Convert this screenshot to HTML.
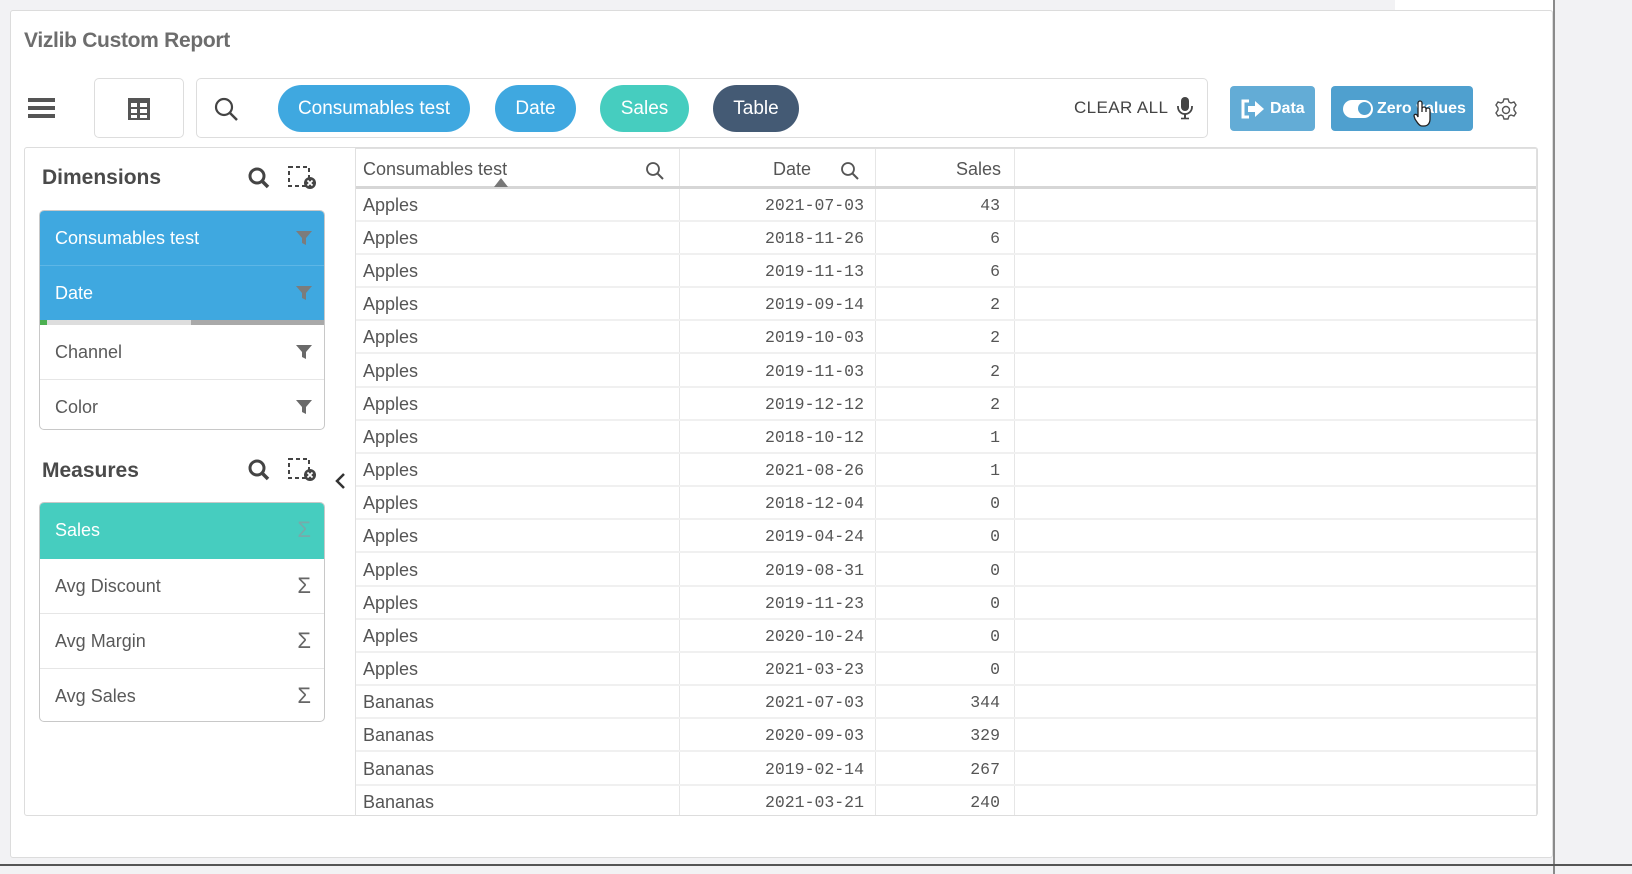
<!DOCTYPE html>
<html><head><meta charset="utf-8">
<style>
*{box-sizing:border-box;margin:0;padding:0}
body{width:1632px;height:874px;background:#f2f2f4;font-family:"Liberation Sans",sans-serif;position:relative;overflow:hidden;color:#595959}
.a{position:absolute}
.card{left:10px;top:10px;width:1543px;height:848px;background:#fff;border:1px solid #dcdcdc;border-radius:3px}
.title{left:24px;top:29px;font-size:21px;font-weight:bold;color:#6d6d6d;letter-spacing:-0.3px}
.box{border:1px solid #ddd;border-radius:5px;background:#fff}
.pill{height:47px;top:85px;border-radius:24px;color:#fff;font-size:19px;line-height:47px;text-align:center}
.btn{top:86px;height:45px;border-radius:4px;color:#fff;font-weight:bold;font-size:16px;line-height:45px}
.list{left:39px;width:286px;border:1px solid #c8c8c8;border-radius:5px;overflow:hidden;background:#fff}
.it{height:55px;line-height:54px;padding-left:15px;font-size:18px;color:#595959;border-bottom:1px solid #e6e6e6;position:relative}
.it svg{position:absolute;right:12px;top:19px}
.h2{font-size:21px;font-weight:bold;color:#4a4a4a}
.row{position:absolute;left:356px;width:1180px;height:33px;border-bottom:2px solid #f0f0f0;font-size:18px;line-height:33px;color:#555}
.row span{position:absolute;top:0}
.c1{left:7px}
.c2{right:672px;font-family:"Liberation Mono",monospace;font-size:16.5px}
.c3{right:536px;font-family:"Liberation Mono",monospace;font-size:16.5px}
.vl{position:absolute;top:149px;height:666px;width:1px;background:#e6e6e6}
</style></head><body>
<div class="a" style="left:1395px;top:0;width:160px;height:11px;background:#fff"></div>
<div class="a" style="left:1553px;top:0;width:2px;height:874px;background:#8a8a8a"></div>
<div class="a" style="left:0;top:864px;width:1632px;height:2px;background:#555"></div>
<div class="a card"></div>
<div class="a title">Vizlib Custom Report</div>

<div class="a" style="left:28px;top:98px;width:27px;height:4px;background:#555"></div>
<div class="a" style="left:28px;top:106px;width:27px;height:4px;background:#555"></div>
<div class="a" style="left:28px;top:114px;width:27px;height:4px;background:#555"></div>

<div class="a box" style="left:94px;top:78px;width:90px;height:60px"></div>
<svg class="a" style="left:127px;top:97px" width="24" height="24" viewBox="0 0 24 24"><rect x="1" y="1" width="22" height="22" fill="#555"/><g fill="#fff"><rect x="4" y="6" width="6" height="4"/><rect x="13" y="6" width="7" height="4"/><rect x="4" y="12" width="6" height="4"/><rect x="13" y="12" width="7" height="4"/><rect x="4" y="18" width="6" height="3"/><rect x="13" y="18" width="7" height="3"/></g></svg>

<div class="a box" style="left:196px;top:78px;width:1012px;height:60px"></div>
<svg class="a" style="left:213px;top:96px" width="26" height="26" viewBox="0 0 26 26"><circle cx="11" cy="11" r="8" fill="none" stroke="#444" stroke-width="2.2"/><line x1="17" y1="17" x2="24" y2="24" stroke="#444" stroke-width="2.5"/></svg>
<div class="a pill" style="left:278px;width:192px;background:#3fa8e0">Consumables test</div>
<div class="a pill" style="left:495px;width:81px;background:#3fa8e0">Date</div>
<div class="a pill" style="left:600px;width:89px;background:#46cdbf">Sales</div>
<div class="a pill" style="left:713px;width:86px;background:#445a74">Table</div>
<div class="a" style="left:1074px;top:98px;font-size:17px;letter-spacing:0.4px;color:#444">CLEAR ALL</div>
<svg class="a" style="left:1176px;top:96px" width="18" height="24" viewBox="0 0 18 24"><rect x="5" y="1" width="8" height="14" rx="4" fill="#444"/><path d="M2 10v1a7 7 0 0 0 14 0v-1" fill="none" stroke="#444" stroke-width="1.8"/><line x1="9" y1="18" x2="9" y2="22" stroke="#444" stroke-width="2"/><line x1="5" y1="22.5" x2="13" y2="22.5" stroke="#444" stroke-width="1.6"/></svg>

<div class="a btn" style="left:1230px;width:85px;background:#63acd6"><svg style="position:absolute;left:10px;top:12px" width="26" height="22" viewBox="0 0 26 22"><path d="M9 3H3v16h6" fill="none" stroke="#fff" stroke-width="3"/><path d="M8 8h7V3l9 8-9 8v-5H8z" fill="#fff"/></svg><span style="position:absolute;left:40px">Data</span></div>
<div class="a btn" style="left:1331px;width:142px;background:#4fa0cf"><span style="position:absolute;left:12px;top:14px;width:30px;height:18px;border-radius:9px;background:#fff"></span><span style="position:absolute;left:27px;top:16px;width:13px;height:13px;border-radius:50%;background:#4fa0cf"></span><span style="position:absolute;left:46px">Zero values</span></div>
<svg class="a" style="left:1413px;top:100px" width="20" height="28" viewBox="0 0 20 28"><path d="M5 14V3a2 2 0 0 1 4 0v9 -3a2 2 0 0 1 4 0v3-2a2 2 0 0 1 4 0v9c0 4-2 7-6 7H9c-3 0-5-4-7-7l-1-3c0-2 2-2 3-1l1 2z" fill="#fff" stroke="#222" stroke-width="1.3"/></svg>
<svg class="a" style="left:1493px;top:97px" width="26" height="26" viewBox="0 0 26 26"><path d="M11 2h4l1 3 2 1 3-1 2 3-2 3v2l2 3-2 3-3-1-2 1-1 3h-4l-1-3-2-1-3 1-2-3 2-3v-2L3 8l2-3 3 1 2-1z" fill="none" stroke="#555" stroke-width="1.4"/><circle cx="13" cy="13" r="3.5" fill="none" stroke="#555" stroke-width="1.4"/></svg>

<div class="a" style="left:24px;top:147px;width:1514px;height:669px;border:1px solid #ddd;border-radius:3px"></div>
<div class="a h2" style="left:42px;top:166px">Dimensions</div>
<svg class="a" style="left:247px;top:166px" width="24" height="24" viewBox="0 0 24 24"><circle cx="10" cy="10" r="7" fill="none" stroke="#444" stroke-width="3"/><line x1="15" y1="15" x2="21" y2="21" stroke="#444" stroke-width="3.5"/></svg>
<svg class="a" style="left:287px;top:165px" width="32" height="26" viewBox="0 0 32 26"><rect x="2" y="2" width="20" height="19" fill="none" stroke="#444" stroke-width="2" stroke-dasharray="4 3"/><circle cx="23" cy="18" r="6" fill="#444"/><path d="M20.5 15.5l5 5M25.5 15.5l-5 5" stroke="#fff" stroke-width="1.8"/></svg>

<div class="a list" style="top:210px;height:220px">
<div class="it" style="background:#3fa8e0;color:#fff;border-color:#5db6e6">Consumables test<svg width="16" height="16" viewBox="0 0 16 16"><path d="M0 1h16l-6 7v7l-4-2V8z" fill="#7c7c7c"/></svg></div>
<div class="it" style="background:#3fa8e0;color:#fff;border:0;height:54px">Date<svg width="16" height="16" viewBox="0 0 16 16"><path d="M0 1h16l-6 7v7l-4-2V8z" fill="#7c7c7c"/></svg></div>
<div style="height:5px;background:#a9a9a9;position:relative"><div style="position:absolute;left:0;width:7px;height:5px;background:#4caf50"></div><div style="position:absolute;left:7px;width:144px;height:5px;background:#ddd"></div></div>
<div class="it">Channel<svg width="16" height="16" viewBox="0 0 16 16"><path d="M0 1h16l-6 7v7l-4-2V8z" fill="#6a6a6a"/></svg></div>
<div class="it" style="border:0">Color<svg width="16" height="16" viewBox="0 0 16 16"><path d="M0 1h16l-6 7v7l-4-2V8z" fill="#6a6a6a"/></svg></div>
</div>

<div class="a h2" style="left:42px;top:459px">Measures</div>
<svg class="a" style="left:247px;top:458px" width="24" height="24" viewBox="0 0 24 24"><circle cx="10" cy="10" r="7" fill="none" stroke="#444" stroke-width="3"/><line x1="15" y1="15" x2="21" y2="21" stroke="#444" stroke-width="3.5"/></svg>
<svg class="a" style="left:287px;top:457px" width="32" height="26" viewBox="0 0 32 26"><rect x="2" y="2" width="20" height="19" fill="none" stroke="#444" stroke-width="2" stroke-dasharray="4 3"/><circle cx="23" cy="18" r="6" fill="#444"/><path d="M20.5 15.5l5 5M25.5 15.5l-5 5" stroke="#fff" stroke-width="1.8"/></svg>
<svg class="a" style="left:334px;top:472px" width="12" height="18" viewBox="0 0 12 18"><path d="M10 2L3 9l7 7" fill="none" stroke="#333" stroke-width="2.5"/></svg>

<div class="a list" style="top:502px;height:220px">
<div class="it" style="background:#46cdbf;color:#fff;border:0;height:56px">Sales<span style="position:absolute;right:13px;top:0;color:#7aa;font-size:22px">Σ</span></div>
<div class="it">Avg Discount<span style="position:absolute;right:13px;top:0;color:#666;font-size:22px">Σ</span></div>
<div class="it">Avg Margin<span style="position:absolute;right:13px;top:0;color:#666;font-size:22px">Σ</span></div>
<div class="it" style="border:0">Avg Sales<span style="position:absolute;right:13px;top:0;color:#666;font-size:22px">Σ</span></div>
</div>

<div class="a" style="left:355px;top:148px;width:1182px;height:668px;border-left:1px solid #e0e0e0;border-right:1px solid #e0e0e0;border-top:1px solid #e0e0e0"></div>
<div class="vl" style="left:679px"></div><div class="vl" style="left:875px"></div><div class="vl" style="left:1014px"></div>
<div class="a" style="left:356px;top:186px;width:1180px;height:3px;background:#d6d6d6"></div>
<div class="a" style="left:363px;top:159px;font-size:18px;color:#555">Consumables test</div>
<div class="a" style="left:494px;top:178px;width:0;height:0;border-left:7px solid transparent;border-right:7px solid transparent;border-bottom:9px solid #777"></div>
<svg class="a" style="left:645px;top:161px" width="20" height="20" viewBox="0 0 20 20"><circle cx="8" cy="8" r="6" fill="none" stroke="#555" stroke-width="1.8"/><line x1="12.5" y1="12.5" x2="18" y2="18" stroke="#555" stroke-width="2"/></svg>
<div class="a" style="left:773px;top:159px;font-size:18px;color:#555">Date</div>
<svg class="a" style="left:840px;top:161px" width="20" height="20" viewBox="0 0 20 20"><circle cx="8" cy="8" r="6" fill="none" stroke="#555" stroke-width="1.8"/><line x1="12.5" y1="12.5" x2="18" y2="18" stroke="#555" stroke-width="2"/></svg>
<div class="a" style="left:956px;top:159px;font-size:18px;color:#555">Sales</div>

<div class="row" style="top:189px"><span class="c1">Apples</span><span class="c2">2021-07-03</span><span class="c3">43</span></div>
<div class="row" style="top:222px"><span class="c1">Apples</span><span class="c2">2018-11-26</span><span class="c3">6</span></div>
<div class="row" style="top:255px"><span class="c1">Apples</span><span class="c2">2019-11-13</span><span class="c3">6</span></div>
<div class="row" style="top:288px"><span class="c1">Apples</span><span class="c2">2019-09-14</span><span class="c3">2</span></div>
<div class="row" style="top:321px"><span class="c1">Apples</span><span class="c2">2019-10-03</span><span class="c3">2</span></div>
<div class="row" style="top:355px"><span class="c1">Apples</span><span class="c2">2019-11-03</span><span class="c3">2</span></div>
<div class="row" style="top:388px"><span class="c1">Apples</span><span class="c2">2019-12-12</span><span class="c3">2</span></div>
<div class="row" style="top:421px"><span class="c1">Apples</span><span class="c2">2018-10-12</span><span class="c3">1</span></div>
<div class="row" style="top:454px"><span class="c1">Apples</span><span class="c2">2021-08-26</span><span class="c3">1</span></div>
<div class="row" style="top:487px"><span class="c1">Apples</span><span class="c2">2018-12-04</span><span class="c3">0</span></div>
<div class="row" style="top:520px"><span class="c1">Apples</span><span class="c2">2019-04-24</span><span class="c3">0</span></div>
<div class="row" style="top:554px"><span class="c1">Apples</span><span class="c2">2019-08-31</span><span class="c3">0</span></div>
<div class="row" style="top:587px"><span class="c1">Apples</span><span class="c2">2019-11-23</span><span class="c3">0</span></div>
<div class="row" style="top:620px"><span class="c1">Apples</span><span class="c2">2020-10-24</span><span class="c3">0</span></div>
<div class="row" style="top:653px"><span class="c1">Apples</span><span class="c2">2021-03-23</span><span class="c3">0</span></div>
<div class="row" style="top:686px"><span class="c1">Bananas</span><span class="c2">2021-07-03</span><span class="c3">344</span></div>
<div class="row" style="top:719px"><span class="c1">Bananas</span><span class="c2">2020-09-03</span><span class="c3">329</span></div>
<div class="row" style="top:753px"><span class="c1">Bananas</span><span class="c2">2019-02-14</span><span class="c3">267</span></div>
<div class="row" style="top:786px;height:29px;border:0"><span class="c1">Bananas</span><span class="c2">2021-03-21</span><span class="c3">240</span></div>
</body></html>
